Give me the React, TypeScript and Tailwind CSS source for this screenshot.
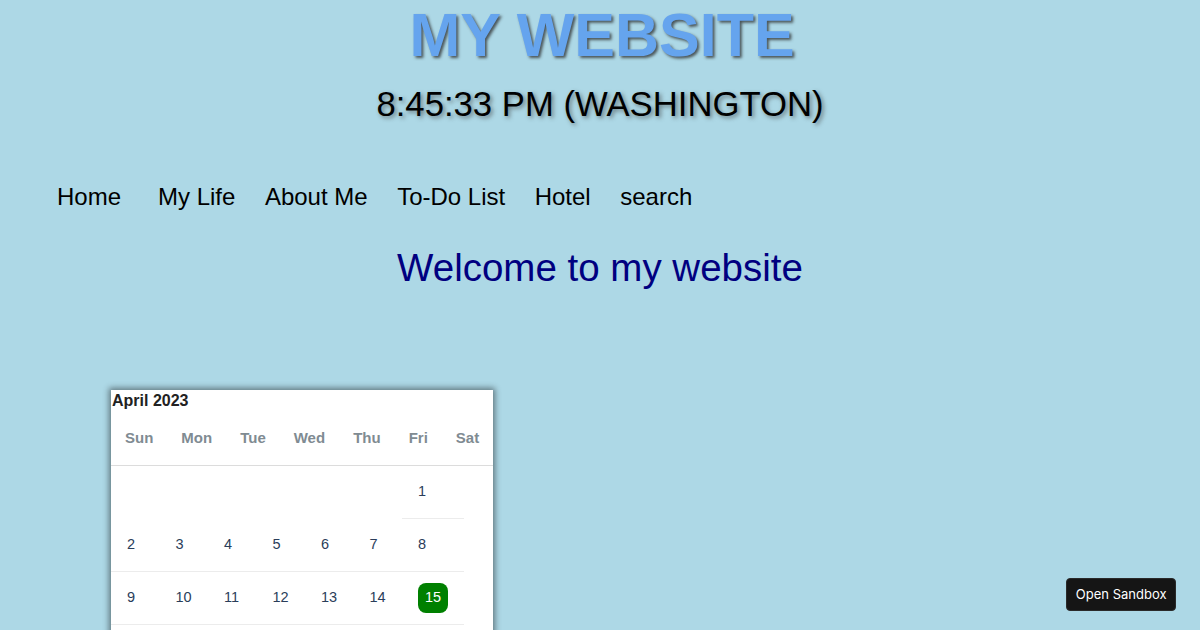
const days = ['Sun', 'Mon', 'Tue', 'Wed', 'Thu', 'Fri', 'Sat'];

// only the weeks that fit above the fold
const weeks: (number | null)[][] = [
  [null, null, null, null, null, null, 1],
  [2, 3, 4, 5, 6, 7, 8],
  [9, 10, 11, 12, 13, 14, 15],
];

function Calendar() {
  return (
    <div className="w-[382px] bg-white pb-[30px] shadow-[0_0_6px_2px_rgba(0,0,0,0.45)] font-['Liberation_Sans',Arial,sans-serif]">
      <div className="flex h-[21px] items-center pl-px pt-px text-[16px] font-bold text-[#222]">April 2023</div>
      <div className="flex h-[55px] items-center border-b border-[#dcdcdc]">
        {days.map((d) => (
          <div key={d} className="px-[14px] text-[15px] font-bold text-[#808b92]">
            {d}
          </div>
        ))}
      </div>
      {weeks.map((week, i) => (
        <div key={i} className="grid grid-cols-[repeat(6,48.5px)_62px]">
          {week.map((n, j) => (
            <div
              key={j}
              className={`flex h-[53px] items-center pl-[16px] text-[14.5px] text-[#2a3d5a] ${n ? 'border-b border-[#ececec]' : ''}`}
            >
              {n === 15 ? (
                <span className="flex h-[30px] items-center rounded-[8px] bg-[#008000] px-[7px] text-white">{n}</span>
              ) : (
                n
              )}
            </div>
          ))}
        </div>
      ))}
    </div>
  );
}

export default function App() {
  const links = ['My Life', 'About Me', 'To-Do List', 'Hotel', 'search'];

  return (
    <div className="relative h-[630px] overflow-hidden bg-[#add8e6] font-['Liberation_Sans',Arial,sans-serif]">
      <header className="flex flex-col items-center">
        <h1 className="mt-[3px] pl-[4px] text-[61px] font-bold leading-[64px] text-[#65a4ee] [text-shadow:2px_2px_3px_rgba(40,40,40,0.75)]">
          MY WEBSITE
        </h1>
        <div className="mt-[17px] text-[34.7px] leading-[40px] text-black [text-shadow:2px_2px_4px_rgba(60,60,60,0.6)]">
          8:45:33 PM (WASHINGTON)
        </div>
      </header>

      <nav className="mt-[58px] flex items-center pl-[57px] text-[24px] leading-[30px] text-black">
        <a className="mr-[37px]">Home</a>
        {links.map((l) => (
          <a key={l} className="mr-[29.5px]">
            {l}
          </a>
        ))}
      </nav>

      <h2 className="mt-[33px] text-center text-[38.5px] leading-[46px] text-[#000080]">Welcome to my website</h2>

      <div className="mt-[99px] pl-[111px]">
        <Calendar />
      </div>

      <button className="absolute bottom-[19px] right-[24px] h-[33px] rounded-[4px] border border-[#2a2a2a] bg-[#151515] px-[8.5px] font-['Inter',sans-serif] text-[13px] text-white">
        Open Sandbox
      </button>
    </div>
  );
}
